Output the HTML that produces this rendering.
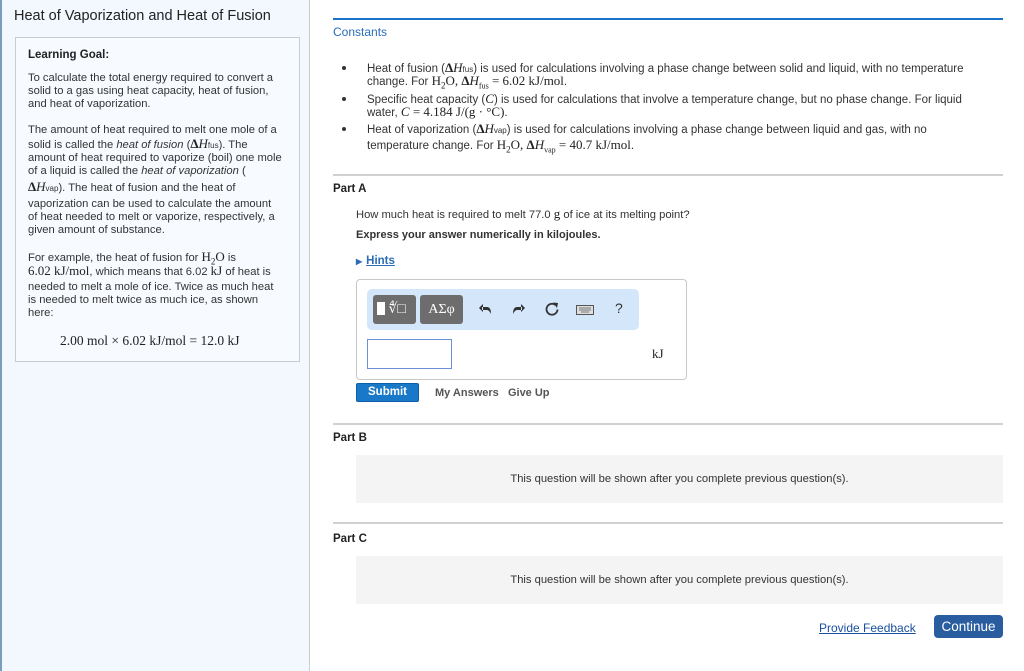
<!DOCTYPE html>
<html><head><meta charset="utf-8"><style>
*{margin:0;padding:0;box-sizing:border-box}
body{width:1024px;height:671px;overflow:hidden;background:#fff;font-family:"Liberation Sans",Arial,sans-serif;color:#333;position:relative;font-size:11px}
.a{position:absolute;white-space:nowrap}
.m{font-family:"Liberation Serif","DejaVu Serif",serif;font-size:13px;color:#222}
.s{font-size:8px}
#left{position:absolute;left:0;top:0;width:310px;height:671px;background:#f2f8fe;border-right:1px solid #ccc;border-left:2px solid #7a9cc0}
#box{position:absolute;left:13px;top:37px;width:285px;height:325px;border:1px solid #c8ccd0;background:#f7faff}
.l{font-size:11.2px;color:#333;line-height:13px}
.c{font-size:11.5px}
.hr{position:absolute;left:333px;width:670px;height:2px;background:#d0d0d0}
.gray{position:absolute;left:356px;width:647px;height:48px;background:#f4f4f4;text-align:center;line-height:48px;font-size:11.2px;color:#333}
.b{font-weight:bold;font-size:11.5px;color:#222}
.dot{position:absolute;left:342px;width:4px;height:4px;border-radius:50%;background:#333}
</style></head><body>
<div id="left">
<div class="a" style="left:12px;top:8px;font-size:14.5px;color:#222">Heat of Vaporization and Heat of Fusion</div>
<div id="box"></div>
<div class="a b" style="left:26px;top:49px;font-size:11.5px">Learning Goal:</div>
<div class="a l" style="left:26px;top:72px">To calculate the total energy required to convert a<br>solid to a gas using heat capacity, heat of fusion,<br>and heat of vaporization.</div>
<div class="a l" style="left:26px;top:124px">The amount of heat required to melt one mole of a<br>solid is called the <i>heat of fusion</i> (<span class="m"><b>Δ</b><i>H</i></span><span class="s">fus</span>). The<br>amount of heat required to vaporize (boil) one mole<br>of a liquid is called the <i>heat of vaporization</i> (</div>
<div class="a l" style="left:26px;top:180px"><span class="m"><b>Δ</b><i>H</i></span><span class="s">vap</span>). The heat of fusion and the heat of</div>
<div class="a l" style="left:26px;top:198px">vaporization can be used to calculate the amount<br>of heat needed to melt or vaporize, respectively, a<br>given amount of substance.</div>
<div class="a l" style="left:26px;top:250px">For example, the heat of fusion for <span class="m">H<sub style="font-size:9px">2</sub>O</span> is</div>
<div class="a l" style="left:26px;top:264px"><span class="m">6.02 kJ/mol</span>, which means that 6.02 <span class="m">kJ</span> of heat is</div>
<div class="a l" style="left:26px;top:281px">needed to melt a mole of ice. Twice as much heat<br>is needed to melt twice as much ice, as shown<br>here:</div>
<div class="a m" style="left:58px;top:333px;font-size:13.5px">2.00 mol × 6.02 kJ/mol = 12.0 kJ</div>
</div>

<div class="a" style="left:333px;top:18px;width:670px;height:2px;background:#1a73c8"></div>
<div class="a" style="left:333px;top:25px;font-size:12px;color:#2a6db5">Constants</div>
<div class="dot" style="top:66px"></div>
<div class="dot" style="top:97px"></div>
<div class="dot" style="top:127px"></div>
<div class="a l c" style="left:367px;top:61px">Heat of fusion (<span class="m"><b>Δ</b><i>H</i></span><span class="s">fus</span>) is used for calculations involving a phase change between solid and liquid, with no temperature</div>
<div class="a l c" style="left:367px;top:74px">change. For <span class="m">H<sub style="font-size:9px">2</sub>O, <b>Δ</b><i>H</i><sub style="font-size:8px">fus</sub> = 6.02 kJ/mol</span>.</div>
<div class="a l c" style="left:367px;top:92px">Specific heat capacity (<i class="m">C</i>) is used for calculations that involve a temperature change, but no phase change. For liquid</div>
<div class="a l c" style="left:367px;top:105px">water, <span class="m"><i>C</i> = 4.184 J/(g · °C)</span>.</div>
<div class="a l c" style="left:367px;top:122px">Heat of vaporization (<span class="m"><b>Δ</b><i>H</i></span><span class="s">vap</span>) is used for calculations involving a phase change between liquid and gas, with no</div>
<div class="a l c" style="left:367px;top:138px">temperature change. For <span class="m">H<sub style="font-size:9px">2</sub>O, <b>Δ</b><i>H</i><sub style="font-size:8px">vap</sub> = 40.7 kJ/mol</span>.</div>

<div class="hr" style="top:174px"></div>
<div class="a b" style="left:333px;top:183px">Part A</div>
<div class="a l" style="left:356px;top:207px">How much heat is required to melt 77.0 <span class="m">g</span> of ice at its melting point?</div>
<div class="a b" style="left:356px;top:229px;font-size:11px;color:#333">Express your answer numerically in kilojoules.</div>
<div class="a" style="left:356px;top:255px;font-size:11.5px;color:#2a6db5;font-weight:bold;text-decoration:underline"><span style="font-size:8px;text-decoration:none;display:inline-block;margin-right:4px">▶</span>Hints</div>

<div class="a" style="left:356px;top:279px;width:331px;height:101px;border:1px solid #c8c8c8;border-radius:4px"></div>
<div class="a" style="left:367px;top:289px;width:272px;height:41px;background:#d3e6fa;border-radius:5px"></div>
<div class="a" style="left:373px;top:295px;width:43px;height:29px;background:#6d6d6d;border-radius:3px;color:#fff;font-family:'Liberation Serif',serif;font-size:14px;line-height:29px;padding-left:4px"><span style="display:inline-block;width:8px;height:13px;background:#fff;vertical-align:-2px"></span> ∜□</div>
<div class="a" style="left:420px;top:295px;width:43px;height:29px;background:#6d6d6d;border-radius:3px;color:#fff;font-family:'Liberation Serif',serif;font-size:14px;line-height:29px;text-align:center">ΑΣφ</div>
<svg class="a" style="left:478px;top:302px" width="16" height="14" viewBox="0 0 16 14"><path d="M5 2 L1 6 L5 10 Z M4 5 H9 Q13 5 13 12 Q11 8 9 8 H4 Z" fill="#333"/></svg>
<svg class="a" style="left:510px;top:302px" width="16" height="14" viewBox="0 0 16 14"><path d="M11 2 L15 6 L11 10 Z M12 5 H7 Q3 5 3 12 Q5 8 7 8 H12 Z" fill="#333"/></svg>
<svg class="a" style="left:544px;top:301px" width="16" height="16" viewBox="0 0 16 16"><path d="M11.5 4 A5.5 5.5 0 1 0 13.5 8.5" fill="none" stroke="#333" stroke-width="1.8"/><path d="M9 1.5 L14 2 L13 7 Z" fill="#333"/></svg>
<svg class="a" style="left:576px;top:305px" width="18" height="10" viewBox="0 0 18 10"><rect x="0.5" y="0.5" width="17" height="9" fill="#ddd" stroke="#555"/><path d="M3 3h12M3 5h12M5 7h8" stroke="#777" stroke-width="1"/></svg>
<div class="a" style="left:615px;top:300px;font-size:14px;color:#333">?</div>
<div class="a" style="left:367px;top:339px;width:85px;height:30px;border:1px solid #6a8fd6"></div>
<div class="a m" style="left:652px;top:346px;font-size:13px">kJ</div>

<div class="a" style="left:356px;top:383px;width:63px;height:19px;background:#1a78c8;border:1px solid #0f5ea8;border-radius:2px;color:#fff;font-weight:bold;font-size:11.5px;text-align:center;line-height:17px">Submit</div>
<div class="a" style="left:435px;top:387px;font-size:11px;font-weight:bold;color:#555">My Answers&nbsp;&nbsp; Give Up</div>

<div class="hr" style="top:423px"></div>
<div class="a b" style="left:333px;top:432px">Part B</div>
<div class="gray" style="top:455px">This question will be shown after you complete previous question(s).</div>
<div class="hr" style="top:522px"></div>
<div class="a b" style="left:333px;top:533px">Part C</div>
<div class="gray" style="top:556px">This question will be shown after you complete previous question(s).</div>

<div class="a" style="left:819px;top:621px;font-size:12px;color:#1a4fa0;text-decoration:underline">Provide Feedback</div>
<div class="a" style="left:934px;top:615px;width:69px;height:23px;background:#2a5da0;border-radius:4px;color:#fff;font-size:13.5px;text-align:center;line-height:23px">Continue</div>
</body></html>
